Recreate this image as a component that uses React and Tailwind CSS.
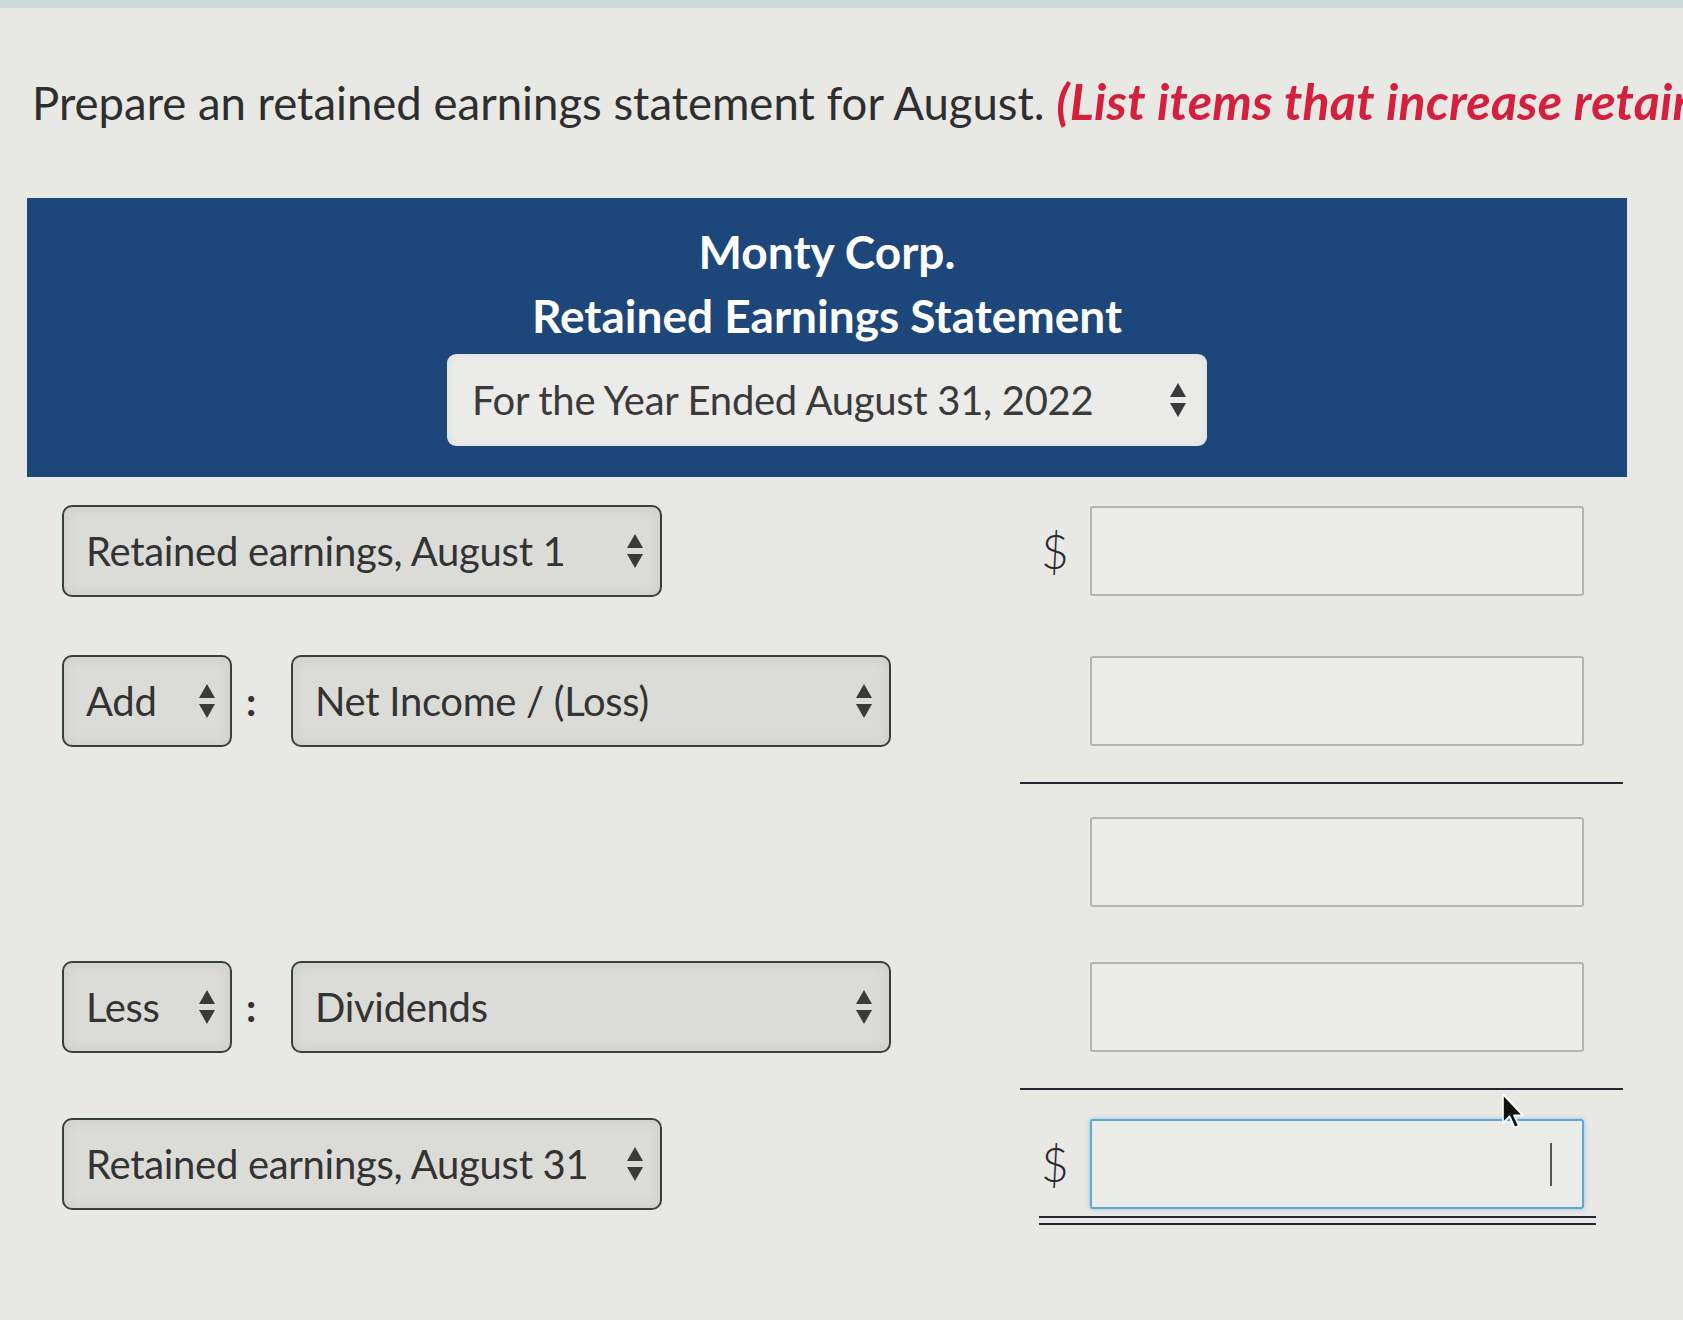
import React from "react";

const Arrows = () => (
  <svg width="18" height="36" viewBox="0 0 18 36" className="shrink-0">
    <path d="M9 1 L17 15 L1 15 Z" fill="#3a3a3a" />
    <path d="M1 21 L17 21 L9 35 Z" fill="#3a3a3a" />
  </svg>
);

const Select = ({ label, width, arrowPad = "pr-[16px]" }) => (
  <div
    className={`${width} h-[92px] shrink-0 flex items-center justify-between pl-[22px] ${arrowPad} rounded-[10px] border-[2.5px] border-[#36413a] bg-[#dbdcd8] shadow-[inset_0_0_14px_rgba(0,0,0,0.08)]`}
  >
    <span className="text-[40px] text-[#333333] whitespace-nowrap tracking-[-0.3px]">
      {label}
    </span>
    <Arrows />
  </div>
);

const AmountBox = ({ active }) => (
  <div
    className={`w-[494px] h-[90px] rounded-[3px] border-2 bg-[#ebebe8] flex items-center justify-end pr-[30px] ${
      active
        ? "border-[#5ea8d6] shadow-[0_0_4px_rgba(94,168,214,0.6)]"
        : "border-[#b4b4b1]"
    }`}
  >
    {active && <div className="w-[2px] h-[43px] bg-[#555555]" />}
  </div>
);

const Dollar = ({ show }) => (
  <div className="w-[70px] text-center text-[48px] font-light text-[#2a2a33]">
    {show ? "$" : ""}
  </div>
);

const Row = ({ left, dollar, active, className = "" }) => (
  <div className={`flex items-center h-[94px] ${className}`}>
    <div className="w-[958px] flex items-center">{left}</div>
    <div className="flex items-center">
      <Dollar show={dollar} />
      <AmountBox active={active} />
    </div>
  </div>
);

const Colon = () => (
  <div className="w-[59px] pl-[14px] text-[40px] font-bold text-[#333333]">:</div>
);

const Rule = ({ className = "" }) => (
  <div className={`flex ${className}`}>
    <div className="w-[958px]" />
    <div className="w-[603px] h-[2px] bg-[#262630]" />
  </div>
);

export default function App() {
  return (
    <div
      className="relative min-h-[1320px] w-full overflow-hidden bg-[#e8e8e5]"
      style={{ fontFamily: "Lato, 'Open Sans', sans-serif" }}
    >
      {/* top strip */}
      <div className="h-[8px] bg-[#cdd8da]" />

      {/* Instruction */}
      <div className="mt-[66px] pl-[32px] whitespace-nowrap text-[45.5px] leading-[54px] text-[#2e2e2e]">
        Prepare an retained earnings statement for August.{" "}
        <span className="italic font-bold text-[50px] tracking-[0.3px] text-[#d41f3d]">
          (List items that increase retained earnings first.)
        </span>
      </div>

      {/* Header */}
      <div className="mt-[68px] ml-[27px] w-[1600px] h-[279px] bg-[#1d477a] flex flex-col items-center pt-[27px]">
        <div className="text-[46px] leading-[54px] font-bold text-white">
          Monty Corp.
        </div>
        <div className="mt-[10px] text-[46px] leading-[54px] font-bold text-white">
          Retained Earnings Statement
        </div>
        <div className="mt-[11px] w-[760px] h-[92px] flex items-center justify-between pl-[25px] pr-[20px] rounded-[9px] bg-[#ebebe9] shadow-[inset_0_0_10px_rgba(0,0,0,0.06)]">
          <span className="text-[40px] text-[#3a3a3a] tracking-[-0.3px]">
            For the Year Ended August 31, 2022
          </span>
          <Arrows />
        </div>
      </div>

      {/* Body */}
      <div className="pl-[62px]">
        <Row
          className="mt-[27px]"
          dollar
          left={<Select label="Retained earnings, August 1" width="w-[600px]" />}
        />
        <Row
          className="mt-[56px]"
          left={
            <>
              <Select label="Add" width="w-[170px]" arrowPad="pr-[14px]" />
              <Colon />
              <Select label="Net Income / (Loss)" width="w-[600px]" />
            </>
          }
        />
        <Rule className="mt-[34px]" />
        <Row className="mt-[31px]" left={null} />
        <Row
          className="mt-[51px]"
          left={
            <>
              <Select label="Less" width="w-[170px]" arrowPad="pr-[14px]" />
              <Colon />
              <Select label="Dividends" width="w-[600px]" />
            </>
          }
        />
        <Rule className="mt-[34px]" />
        <Row
          className="mt-[27px]"
          dollar
          active
          left={<Select label="Retained earnings, August 31" width="w-[600px]" />}
        />
        <div className="flex mt-[5px]">
          <div className="w-[977px]" />
          <div className="w-[557px] h-[9px] border-y-2 border-[#262630]" />
        </div>
      </div>

      {/* mouse pointer */}
      <svg
        className="absolute left-[1500px] top-[1092px]"
        width="28"
        height="40"
        viewBox="0 0 24 36"
      >
        <path
          d="M2 2 L2 28 L8 22 L12.5 32 L16.5 30.5 L12 21 L20 21 Z"
          fill="#111111"
          stroke="#ffffff"
          strokeWidth="1.6"
          strokeLinejoin="round"
        />
      </svg>
    </div>
  );
}
